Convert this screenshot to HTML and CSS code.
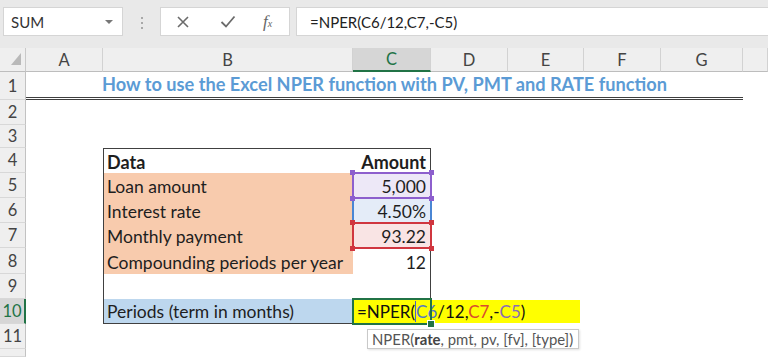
FILE: index.html
```html
<!DOCTYPE html>
<html lang="en">
<head>
<meta charset="utf-8">
<title>NPER</title>
<link rel="stylesheet" href="styles.css">
</head>
<body>
<div class="toolbar">
  <div class="namebox"><span>SUM</span><span class="caret"></span></div>
  <div class="sep"><i></i><i></i><i></i></div>
  <div class="fnbox">
    <svg class="ico-x" width="12" height="12" viewBox="0 0 12 12"><path d="M1 1L11 11M11 1L1 11" stroke="#6b6b6b" stroke-width="1.6" fill="none"/></svg>
    <svg class="ico-ok" width="16" height="13" viewBox="0 0 16 13"><path d="M1.5 7L6 11.5L14.5 1.5" stroke="#6b6b6b" stroke-width="1.8" fill="none"/></svg>
    <span class="fx">f<small>x</small></span>
  </div>
  <div class="formula">=NPER(C6/12,C7,-C5)</div>
</div>

<div class="sheet">
  <div class="row colhdr">
    <div class="corner"><svg width="10" height="12" viewBox="0 0 10 12"><polygon points="10,0 10,12 0,12" fill="#b9b9b9"/></svg></div>
    <div class="ch">A</div>
    <div class="ch">B</div>
    <div class="ch sel">C</div>
    <div class="ch">D</div>
    <div class="ch">E</div>
    <div class="ch">F</div>
    <div class="ch">G</div>
    <div class="ch"></div>
  </div>

  <div class="row r1">
    <div class="rh">1</div>
    <div class="title">How to use the Excel NPER function with PV, PMT and RATE function</div>
  </div>

  <div class="row r2"><div class="rh">2</div></div>
  <div class="row r3"><div class="rh">3</div></div>

  <div class="row r4">
    <div class="rh">4</div>
    <div class="c"></div>
    <div class="c b tl tt bold">Data</div>
    <div class="c b tr tt bold num">Amount</div>
  </div>

  <div class="row r5">
    <div class="rh">5</div>
    <div class="c"></div>
    <div class="c b tl salmon">Loan amount</div>
    <div class="c b tr num fill-p ref ref-p">5,000<span class="hd h1"></span><span class="hd h2"></span><span class="hd h3"></span><span class="hd h4"></span></div>
  </div>

  <div class="row r6">
    <div class="rh">6</div>
    <div class="c"></div>
    <div class="c b tl salmon">Interest rate</div>
    <div class="c b tr num fill-b ref ref-b">4.50%</div>
  </div>

  <div class="row r7">
    <div class="rh">7</div>
    <div class="c"></div>
    <div class="c b tl salmon">Monthly payment</div>
    <div class="c b tr num fill-r ref ref-r">93.22<span class="hd h1"></span><span class="hd h2"></span><span class="hd h3"></span><span class="hd h4"></span></div>
  </div>

  <div class="row r8">
    <div class="rh">8</div>
    <div class="c"></div>
    <div class="c b tl salmon">Compounding periods per year</div>
    <div class="c b tr num">12</div>
  </div>

  <div class="row r9">
    <div class="rh">9</div>
    <div class="c"></div>
    <div class="c b tl"></div>
    <div class="c b tr"></div>
  </div>

  <div class="row r10">
    <div class="rh sel">10</div>
    <div class="c"></div>
    <div class="c b tl tb lblue">Periods (term in months)</div>
    <div class="c b tr tb active">
      <div class="editor">=NPER(<span class="cur"></span><span class="k-b">C6</span>/12,<span class="k-r">C7</span>,-<span class="k-p">C5</span>)</div>
      <span class="fillh"></span>
      <div class="tip">NPER(<b>rate</b>, pmt, pv, [fv], [type])</div>
    </div>
  </div>

  <div class="row r11"><div class="rh">11</div></div>
  <div class="row r12"><div class="rh"></div></div>
</div>
</body>
</html>
```

FILE: styles.css
```css
html, body {
  margin: 0;
  padding: 0;
  background: #ffffff;
  overflow: hidden;
}
body {
  font-family: "Lato", "Open Sans", "DejaVu Sans", sans-serif;
  color: #222;
  width: 768px;
  height: 357px;
}

/* ---------- toolbar / formula bar ---------- */
.toolbar {
  height: 48px;
  box-sizing: border-box;
  background: #e9e9e9;
  display: flex;
  align-items: flex-start;
  padding-top: 7px;
}
.namebox {
  margin-left: 3px;
  width: 120px;
  height: 29px;
  box-sizing: border-box;
  background: #fff;
  border: 1px solid #d5d5d5;
  display: flex;
  align-items: center;
  justify-content: space-between;
  padding: 0 9px 0 7px;
  font-size: 15px;
  color: #333;
}
.caret {
  width: 0;
  height: 0;
  border-left: 4px solid transparent;
  border-right: 4px solid transparent;
  border-top: 4px solid #777;
}
.sep {
  width: 37px;
  display: flex;
  flex-direction: column;
  align-items: center;
  gap: 3px;
  padding-top: 10px;
}
.sep i {
  display: block;
  width: 2px;
  height: 2px;
  background: #a8a8a8;
}
.fnbox {
  width: 130px;
  height: 29px;
  box-sizing: border-box;
  background: #fff;
  border: 1px solid #d5d5d5;
  display: flex;
  align-items: center;
  padding-left: 16px;
}
.ico-ok { margin-left: 31px; }
.fx {
  margin-left: 27px;
  font-family: "Liberation Serif", serif;
  font-style: italic;
  font-size: 17px;
  color: #666;
}
.fx small { font-size: 10px; }
.formula {
  margin-left: 6px;
  flex: 1;
  height: 29px;
  box-sizing: border-box;
  background: #fff;
  border: 1px solid #d5d5d5;
  border-right: none;
  padding-left: 13px;
  display: flex;
  align-items: center;
  font-size: 15px;
  color: #222;
}

/* ---------- sheet ---------- */
.sheet { background: #fff; }
.row {
  display: grid;
  grid-template-columns: 26px 77px 250px 78px 77px 76px 77px 82px 1fr;
  height: 25px;
  font-size: 17.5px;
}
.colhdr { height: 24px; background: #efefef; }
.r1 { height: 28px; }
.r3 { height: 23px; }
.r8 { height: 26px; }
.r12 { height: 8px; }

.corner {
  border-right: 1px solid #c9c9c9;
  border-bottom: 1px solid #bdbdbd;
  display: flex;
  align-items: flex-end;
  justify-content: flex-end;
  padding: 0 4px 6px 0;
  box-sizing: border-box;
}
.ch {
  border-right: 1px solid #d2d2d2;
  border-bottom: 1px solid #bdbdbd;
  display: flex;
  align-items: center;
  justify-content: center;
  color: #444;
  font-size: 16.5px;
  box-sizing: border-box;
}
.ch.sel {
  background: #d6d6d6;
  color: #217346;
  border-bottom: 2px solid #217346;
}
.rh {
  background: #efefef;
  border-right: 1px solid #c2c2c2;
  border-bottom: 1px solid #d8d8d8;
  box-sizing: border-box;
  display: flex;
  align-items: center;
  justify-content: center;
  color: #444;
  font-size: 16.5px;
}
.rh.sel {
  background: #d6d6d6;
  color: #217346;
  border-right: 2px solid #217346;
}

.title {
  grid-column: 2 / 9;
  border-bottom: 3px double #3f3f3f;
  box-sizing: border-box;
  text-align: center;
  color: #5b9bd5;
  font-weight: 700;
  font-size: 18.2px;
  line-height: 25px;
  white-space: nowrap;
}

.c {
  box-sizing: border-box;
  display: flex;
  align-items: flex-end;
  line-height: 22px;
  padding: 0 3px;
  white-space: nowrap;
  color: #1e1e1e;
}
.b { position: relative; }
.bold { font-weight: 700; font-size: 18px; }
.num { justify-content: flex-end; padding-right: 4px; }
.tl { border-left: 1px solid #404040; }
.tr { border-right: 1px solid #404040; }
.tt { border-top: 1px solid #404040; }
.tb { border-bottom: 1px solid #404040; }

.salmon { background: #f8cbad; }
.lblue { background: #bdd7ee; }
.fill-p { background: #ede8f7; }
.fill-b { background: #e4ecf8; }
.fill-r { background: #f9e4e4; }

/* formula reference highlights (overlay) */
.ref::before {
  content: "";
  position: absolute;
  top: -1px;
  bottom: -1px;
  left: -1px;
  right: -2px;
  border: 2px solid;
  pointer-events: none;
}
.ref-p { z-index: 2; }
.ref-p::before { border-color: #8d5fcd; }
.ref-b { z-index: 1; }
.ref-b::before { border-color: #4a86d4; }
.ref-r { z-index: 2; }
.ref-r::before { border-color: #d0363f; }
.hd {
  position: absolute;
  width: 5px;
  height: 5px;
}
.ref-p .hd { background: #8d5fcd; }
.ref-r .hd { background: #d0363f; }
.h1 { top: -3px; left: -3px; }
.h2 { top: -3px; right: -4px; }
.h3 { bottom: -3px; left: -3px; }
.h4 { bottom: -3px; right: -4px; }

/* active cell in edit mode */
.active {
  z-index: 3;
  overflow: visible;
}
.active::after {
  content: "";
  position: absolute;
  top: -1px;
  left: -1px;
  right: -2px;
  bottom: -2px;
  border: 2px solid #217346;
  pointer-events: none;
}
.editor {
  position: absolute;
  top: 1px;
  left: 0;
  width: 227px;
  height: 23px;
  background: #ffff00;
  padding-left: 4px;
  box-sizing: border-box;
  line-height: 23px;
  color: #111;
  font-size: 17px;
  white-space: nowrap;
}
.cur {
  display: inline-block;
  width: 0;
  height: 21px;
  border-left: 1px solid #4b62c6;
  vertical-align: top;
  margin-top: 1px;
}
.k-b { color: #5478c4; }
.k-r { color: #d94b2e; }
.k-p { color: #8a6cb6; }
.fillh {
  position: absolute;
  right: -5px;
  bottom: -5px;
  width: 6px;
  height: 6px;
  background: #217346;
  border: 1px solid #fff;
  z-index: 1;
}
.tip {
  position: absolute;
  top: 30px;
  left: 14px;
  height: 20px;
  box-sizing: border-box;
  padding: 0 5px 0 4px;
  background: #fff;
  border: 1px solid #c9c9c9;
  box-shadow: 1px 1px 2px rgba(0, 0, 0, 0.12);
  color: #555;
  font-size: 14.9px;
  line-height: 18px;
  white-space: nowrap;
  z-index: 5;
}
.tip b { font-weight: 700; color: #444; }
```
